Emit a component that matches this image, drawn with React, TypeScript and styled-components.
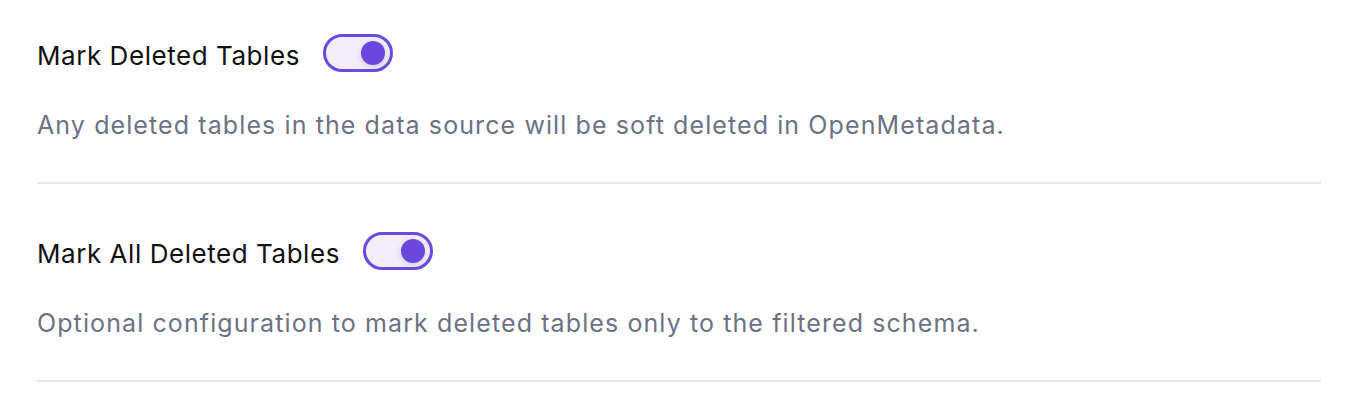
import React, { useState } from 'react';
import styled, { createGlobalStyle } from 'styled-components';

const GlobalStyle = createGlobalStyle`
  body {
    margin: 0;
    background: #ffffff;
    font-family: Inter, "Noto Sans", sans-serif;
  }
`;

const Page = styled.div`
  padding: 0 35px 0 37px;
  width: 1284px;
`;

const Section = styled.div`
  padding: 48px 0 40px;
  border-bottom: 2px solid #e6e6eb;

  &:first-child {
    padding-top: 34px;
  }
`;

const Header = styled.div`
  display: flex;
  align-items: center;
  gap: 23px;
  height: 38px;
`;

const Title = styled.span`
  font-size: 26px;
  color: #111111;
  letter-spacing: 0.55px;
  padding-top: 5px;
`;

const Description = styled.p`
  margin: 36px 0 0;
  font-size: 25px;
  line-height: 34px;
  letter-spacing: 1.1px;
  color: #6b7284;
`;

const Track = styled.button<{ $on: boolean }>`
  display: flex;
  align-items: center;
  justify-content: ${(p) => (p.$on ? 'flex-end' : 'flex-start')};
  box-sizing: border-box;
  width: 70px;
  height: 38px;
  padding: 0 5px;
  border: 3px solid #6a4be0;
  border-radius: 19px;
  background: #f1eef9;
  cursor: pointer;
`;

const Knob = styled.span`
  width: 24px;
  height: 24px;
  border-radius: 50%;
  background: #6a47de;
  box-shadow: 0 2px 6px rgba(60, 40, 120, 0.18);
`;

interface SettingProps {
  title: string;
  description: string;
}

const Setting: React.FC<SettingProps> = ({ title, description }) => {
  const [on, setOn] = useState(true);
  return (
    <Section>
      <Header>
        <Title>{title}</Title>
        <Track $on={on} onClick={() => setOn(!on)}>
          <Knob />
        </Track>
      </Header>
      <Description>{description}</Description>
    </Section>
  );
};

export default function App() {
  return (
    <>
      <GlobalStyle />
      <Page>
        <Setting
          title='Mark Deleted Tables'
          description='Any deleted tables in the data source will be soft deleted in OpenMetadata.'
        />
        <Setting
          title='Mark All Deleted Tables'
          description='Optional configuration to mark deleted tables only to the filtered schema.'
        />
      </Page>
    </>
  );
}
